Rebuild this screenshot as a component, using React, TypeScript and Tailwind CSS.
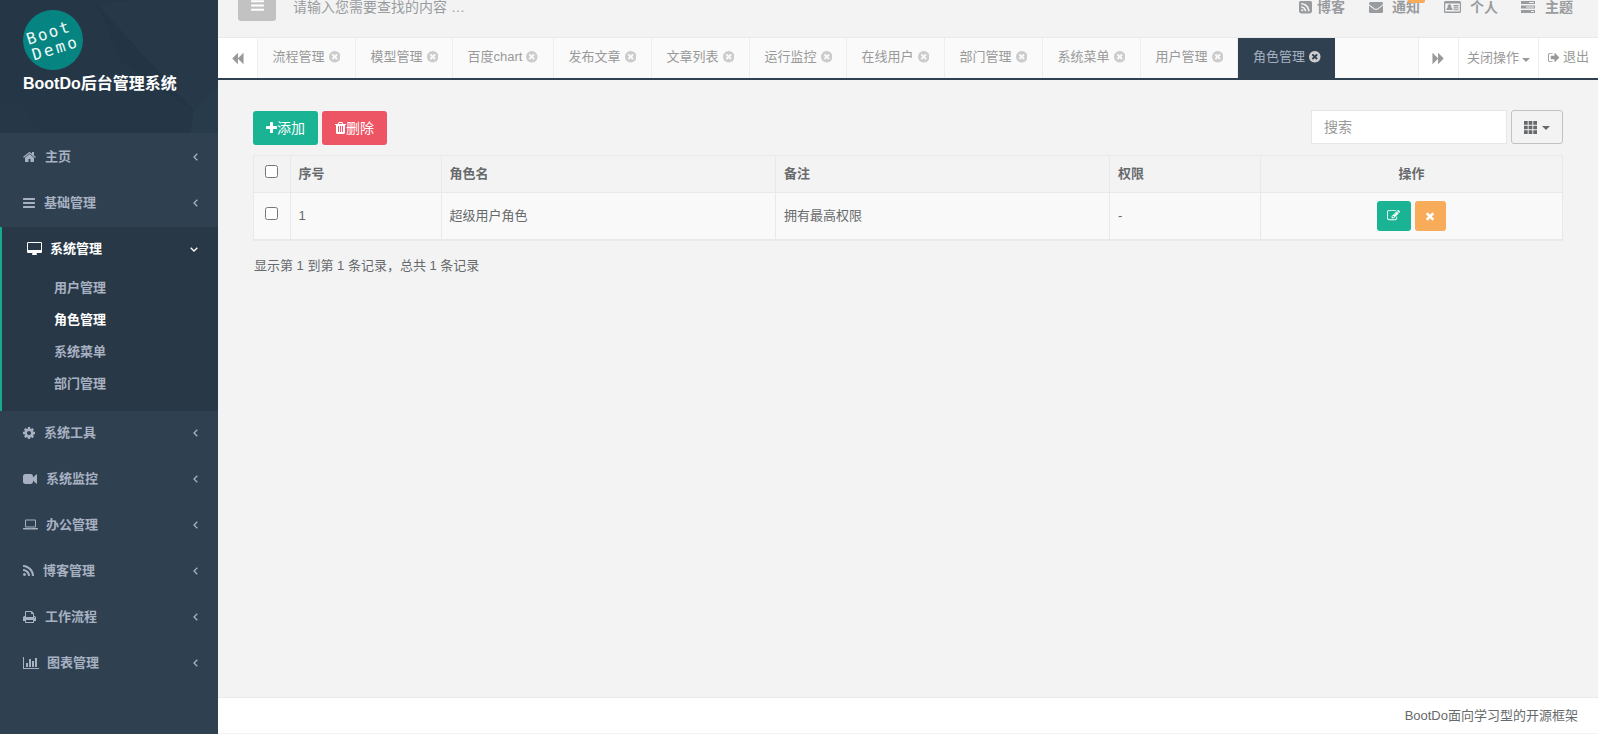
import type { ReactNode } from 'react';

interface IconProps {
  d: string;
  box?: string;
  className?: string;
}

const paths = {
  home: 'M1472 992v480q0 26-19 45t-45 19h-384v-384h-256v384h-384q-26 0-45-19t-19-45v-480q0-1 .5-3t.5-3l575-474 575 474q1 2 1 6zm223-69l-62 74q-8 9-21 11h-3q-13 0-21-7l-692-577-692 577q-12 8-24 7-13-2-21-11l-62-74q-8-10-7-23.5t11-21.5l719-599q32-26 76-26t76 26l244 204v-195q0-14 9-23t23-9h192q14 0 23 9t9 23v408l219 182q10 8 11 21.5t-7 23.5z',
  bars: 'M1664 1344v128q0 26-19 45t-45 19h-1408q-26 0-45-19t-19-45v-128q0-26 19-45t45-19h1408q26 0 45 19t19 45zm0-512v128q0 26-19 45t-45 19h-1408q-26 0-45-19t-19-45v-128q0-26 19-45t45-19h1408q26 0 45 19t19 45zm0-512v128q0 26-19 45t-45 19h-1408q-26 0-45-19t-19-45v-128q0-26 19-45t45-19h1408q26 0 45 19t19 45z',
  backward: 'M1683 141q19-19 32-13t13 32v1472q0 26-13 32t-32-13l-710-710q-9-9-13-19v710q0 26-13 32t-32-13l-710-710q-19-19-19-45t19-45l710-710q19-19 32-13t13 32v710q4-10 13-19z',
  edit: 'M888 1184l116-116-152-152-116 116v56h96v96h56zm440-720q-16-16-33 1l-350 350q-17 17-1 33t33-1l350-350q17-17 1-33zm80 594v190q0 119-84.5 203.5t-203.5 84.5h-832q-119 0-203.5-84.5t-84.5-203.5v-832q0-119 84.5-203.5t203.5-84.5h832q63 0 117 25 15 7 18 23 3 17-9 29l-49 49q-14 14-32 8-23-6-45-6h-832q-66 0-113 47t-47 113v832q0 66 47 113t113 47h832q66 0 113-47t47-113v-126q0-13 9-22l64-64q15-15 35-7t20 29zm-96-738l288 288-672 672h-288v-288zm444 132l-92 92-288-288 92-92q28-28 68-28t68 28l152 152q28 28 28 68t-28 68z',
  times: 'M1490 1322q0 40-28 68l-136 136q-28 28-68 28t-68-28l-294-294-294 294q-28 28-68 28t-68-28l-136-136q-28-28-28-68t28-68l294-294-294-294q-28-28-28-68t28-68l136-136q28-28 68-28t68 28l294 294 294-294q28-28 68-28t68 28l136 136q28 28 28 68t-28 68l-294 294 294 294q28 28 28 68z',
  timesCircle: 'M1277 1122q0-26-19-45l-181-181 181-181q19-19 19-45 0-27-19-46l-90-90q-19-19-46-19-26 0-45 19l-181 181-181-181q-19-19-45-19-27 0-46 19l-90 90q-19 19-19 46 0 26 19 45l181 181-181 181q-19 19-19 45 0 27 19 46l90 90q19 19 46 19 26 0 45-19l181-181 181 181q19 19 45 19 27 0 46-19l90-90q19-19 19-46zm387-226q0 209-103 385.5t-279.5 279.5-385.5 103-385.5-103-279.5-279.5-103-385.5 103-385.5 279.5-279.5 385.5-103 385.5 103 279.5 279.5 103 385.5z',
  plus: 'M1600 736v192q0 40-28 68t-68 28h-416v416q0 40-28 68t-68 28h-192q-40 0-68-28t-28-68v-416h-416q-40 0-68-28t-28-68v-192q0-40 28-68t68-28h416v-416q0-40 28-68t68-28h192q40 0 68 28t28 68v416h416q40 0 68 28t28 68z',
  trash: 'M704 1376v-704q0-14-9-23t-23-9h-64q-14 0-23 9t-9 23v704q0 14 9 23t23 9h64q14 0 23-9t9-23zm256 0v-704q0-14-9-23t-23-9h-64q-14 0-23 9t-9 23v704q0 14 9 23t23 9h64q14 0 23-9t9-23zm256 0v-704q0-14-9-23t-23-9h-64q-14 0-23 9t-9 23v704q0 14 9 23t23 9h64q14 0 23-9t9-23zm-544-992h448l-48-117q-7-9-17-11h-317q-10 2-17 11zm928 32v64q0 14-9 23t-23 9h-96v948q0 83-47 143.5t-113 60.5h-832q-66 0-113-58.5t-47-141.5v-952h-96q-14 0-23-9t-9-23v-64q0-14 9-23t23-9h309l70-167q15-37 54-63t79-26h320q40 0 79 26t54 63l70 167h309q14 0 23 9t9 23z',
  desktop: 'M1728 992v-832q0-13-9.5-22.5t-22.5-9.5h-1600q-13 0-22.5 9.5t-9.5 22.5v832q0 13 9.5 22.5t22.5 9.5h1600q13 0 22.5-9.5t9.5-22.5zm128-832v1088q0 66-47 113t-113 47h-544q0 37 16 77.5t32 71 16 43.5q0 26-19 45t-45 19h-512q-26 0-45-19t-19-45q0-14 16-44t32-70 16-78h-544q-66 0-113-47t-47-113v-1088q0-66 47-113t113-47h1600q66 0 113 47t47 113z',
  cog: 'M1152 896q0-106-75-181t-181-75-181 75-75 181 75 181 181 75 181-75 75-181zm512-109v222q0 12-8 23t-20 13l-185 28q-19 54-39 91 35 50 107 138 10 12 10 25t-9 23q-27 37-99 108t-94 71q-12 0-26-9l-138-108q-44 23-91 38-16 136-29 186-7 28-36 28h-222q-14 0-24.5-8.5t-11.5-21.5l-28-184q-49-16-90-37l-141 107q-10 9-25 9-14 0-25-11-126-114-165-168-7-10-7-23 0-12 8-23 15-21 51-66.5t54-70.5q-27-50-41-99l-183-27q-13-2-21-12.5t-8-23.5v-222q0-12 8-23t19-13l186-28q14-46 39-92-40-57-107-138-10-12-10-24 0-10 9-23 26-36 98.5-107.5t94.5-71.5q13 0 26 10l138 107q44-23 91-38 16-136 29-186 7-28 36-28h222q14 0 24.5 8.5t11.5 21.5l28 184q49 16 90 37l142-107q9-9 24-9 13 0 25 10 129 119 165 170 7 8 7 22 0 12-8 23-15 21-51 66.5t-54 70.5q26 50 41 98l183 28q13 2 21 12.5t8 23.5z',
  video: 'M1792 352v1088q0 42-39 59-13 5-25 5-27 0-45-19l-403-403v166q0 119-84.5 203.5t-203.5 84.5h-704q-119 0-203.5-84.5t-84.5-203.5v-704q0-119 84.5-203.5t203.5-84.5h704q119 0 203.5 84.5t84.5 203.5v165l403-402q18-19 45-19 12 0 25 5 39 17 39 59z',
  laptop: 'M352 1216q-66 0-113-47t-47-113v-704q0-66 47-113t113-47h1088q66 0 113 47t47 113v704q0 66-47 113t-113 47h-1088zm-32-864v704q0 13 9.5 22.5t22.5 9.5h1088q13 0 22.5-9.5t9.5-22.5v-704q0-13-9.5-22.5t-22.5-9.5h-1088q-13 0-22.5 9.5t-9.5 22.5zm1376 928h160v96q0 40-47 68t-113 28h-1600q-66 0-113-28t-47-68v-96h1760zm-720 96q16 0 16-16t-16-16h-160q-16 0-16 16t16 16h160z',
  rss: 'M576 1344q0 80-56 136t-136 56-136-56-56-136 56-136 136-56 136 56 56 136zm512 123q2 28-17 48-18 21-47 21h-135q-25 0-43-16.5t-20-41.5q-22-229-184.5-391.5t-391.5-184.5q-25-2-41.5-20t-16.5-43v-135q0-29 21-47 17-17 43-17h5q160 13 306 80.5t259 181.5q114 113 181.5 259t80.5 306zm512 2q2 27-18 47-18 20-46 20h-143q-26 0-44.5-17.5t-19.5-42.5q-12-215-101-408.5t-231.5-336-336-231.5-408.5-102q-25-1-42.5-19.5t-17.5-43.5v-143q0-28 20-46 18-18 44-18h3q262 13 501.5 120t425.5 294q187 186 294 425.5t120 501.5z',
  print: 'M448 1536h896v-256h-896v256zm0-640h896v-384h-160q-40 0-68-28t-28-68v-160h-640v640zm1152 64q0-26-19-45t-45-19-45 19-19 45 19 45 45 19 45-19 19-45zm128 0v416q0 13-9.5 22.5t-22.5 9.5h-224v160q0 40-28 68t-68 28h-960q-40 0-68-28t-28-68v-160h-224q-13 0-22.5-9.5t-9.5-22.5v-416q0-79 56.5-135.5t135.5-56.5h64v-544q0-40 28-68t68-28h672q40 0 88 20t76 48l152 152q28 28 48 76t20 88v256h64q79 0 135.5 56.5t56.5 135.5z',
  chart: 'M640 896v512h-256v-512h256zm384-512v1024h-256v-1024h256zm1024 1152v128h-2048v-1536h128v1408h1920zm-640-896v768h-256v-768h256zm384-384v1152h-256v-1152h256z',
  rssSquare: 'M640 1216q0-53-37.5-90.5t-90.5-37.5-90.5 37.5-37.5 90.5 37.5 90.5 90.5 37.5 90.5-37.5 37.5-90.5zm351 94q-13-232-177-396t-396-177q-14-1-24 9t-10 23v128q0 13 8.5 22t21.5 10q154 11 264 121t121 264q1 13 10 21.5t22 8.5h128q13 0 23-10t9-24zm384 1q-5-154-56-297.5t-139.5-260-205-205-260-139.5-297.5-56q-14-1-23 9-10 10-10 23v128q0 13 9 22t22 10q204 7 378 111.5t278.5 278.5 111.5 378q1 13 10 22t22 9h128q13 0 23-10 11-9 9-23zm289-959v960q0 119-84.5 203.5t-203.5 84.5h-960q-119 0-203.5-84.5t-84.5-203.5v-960q0-119 84.5-203.5t203.5-84.5h960q119 0 203.5 84.5t84.5 203.5z',
  envelope: 'M1792 710v794q0 66-47 113t-113 47h-1472q-66 0-113-47t-47-113v-794q44 49 101 87 362 246 497 345 57 42 92.5 65.5t94.5 48 110 24.5h2q51 0 110-24.5t94.5-48 92.5-65.5q170-123 498-345 57-39 100-87zm0-294q0 79-49 151t-122 123q-376 261-468 325-10 7-42.5 31t-54 38.5-52 32.5-57.5 27-50 9h-2q-23 0-50-9t-57.5-27-52-32.5-54-38.5-42.5-31q-91-64-262-182.5t-205-142.5q-62-42-117-115.5t-55-136.5q0-78 41.5-130t118.5-52h1472q65 0 112.5 47t47.5 113z',
  signOut: 'M704 1440q0 4 1 20t.5 26.5-3 23.5-10 19.5-20.5 6.5h-320q-119 0-203.5-84.5t-84.5-203.5v-704q0-119 84.5-203.5t203.5-84.5h320q13 0 22.5 9.5t9.5 22.5q0 4 1 20t.5 26.5-3 23.5-10 19.5-20.5 6.5h-320q-66 0-113 47t-47 113v704q0 66 47 113t113 47h312l11.5 1 11.5 3 8 5.5 7 9 2 13.5zm928-544q0 26-19 45l-544 544q-19 19-45 19t-45-19-19-45v-288h-448q-26 0-45-19t-19-45v-384q0-26 19-45t45-19h448v-288q0-26 19-45t45-19 45 19l544 544q19 19 19 45z',
};

const Icon = ({ d, box = '0 0 1792 1792', className = '' }: IconProps) => (
  <svg viewBox={box} fill="currentColor" className={`shrink-0 ${className}`}>
    <path d={d} />
  </svg>
);

const Caret = ({ className = '' }: { className?: string }) => (
  <span className={`border-x-4 border-t-4 border-x-transparent border-t-current ${className}`} />
);

const Logo = () => (
  <svg viewBox="0 0 60 60" className="size-[60px] block font-['DejaVu_Sans_Mono',monospace] font-normal text-[16px]">
    <circle cx="30" cy="30" r="30" fill="#058481" />
    <g fill="#eef8f5">
      <text transform="translate(5.5 35) rotate(-18)" textLength="44">Boot</text>
      <text transform="translate(11 50.500) rotate(-17)" textLength="46">Demo</text>
    </g>
  </svg>
);

const mainMenu = [
  { label: '系统工具', d: paths.cog, box: '128 0 1536 1792', icon: 'w-3 mr-[9px]' },
  { label: '系统监控', d: paths.video, box: '0 0 1792 1792', icon: 'w-3.5 mr-[9px]' },
  { label: '办公管理', d: paths.laptop, box: '-64 0 1920 1792', icon: 'w-[15px] mr-2' },
  { label: '博客管理', d: paths.rss, box: '192 0 1408 1792', icon: 'w-[11px] mr-[9px]' },
  { label: '工作流程', d: paths.print, box: '64 0 1664 1792', icon: 'w-[13px] mr-[9px]' },
  { label: '图表管理', d: paths.chart, box: '0 0 2048 1792', icon: 'w-4 mr-2' },
];

const subMenu = ['用户管理', '角色管理', '系统菜单', '部门管理'];

const tabs = [
  { label: '流程管理', width: 'w-[98px]' },
  { label: '模型管理', width: 'w-[97px]' },
  { label: '百度chart', width: 'w-[101px]' },
  { label: '发布文章', width: 'w-[98px]' },
  { label: '文章列表', width: 'w-[98px]' },
  { label: '运行监控', width: 'w-[97px]' },
  { label: '在线用户', width: 'w-[98px]' },
  { label: '部门管理', width: 'w-[98px]' },
  { label: '系统菜单', width: 'w-[98px]' },
  { label: '用户管理', width: 'w-[97px]' },
];

interface MenuItemProps {
  label: string;
  d: string;
  box: string;
  icon: string;
}

const MenuItem = ({ label, d, box, icon }: MenuItemProps) => (
  <a className="flex items-center h-[46px] pl-[23px] pr-5 text-[#a7b1c2]">
    <Icon d={d} box={box} className={`h-3.5 ${icon}`} />
    <span className="flex-1">{label}</span>
    <svg viewBox="0 0 5 8" className="w-[5px] h-2" fill="none" stroke="currentColor" strokeWidth="1.3">
      <path d="M4.300 .7L1 4l3.300 3.300" />
    </svg>
  </a>
);

const Sidebar = () => (
  <nav className="w-[218px] shrink-0 bg-[#2f4050] text-[13px] font-semibold">
    <div className="relative h-[133px] pt-2.5 pl-[23px] bg-[#253746]">
      <svg viewBox="0 0 218 133" className="absolute inset-0 w-full h-full">
        <path d="M98 5l96 106-74-50z" fill="#233544" />
        <path d="M98 5L130 0h88v85l-24 26z" fill="#273949" />
        <path d="M0 104l24-1 14 30H0z" fill="#263847" />
        <path d="M194 111l24-26v48h-28z" fill="#283b4a" />
      </svg>
      <div className="relative">
        <Logo />
        <strong className="block pt-px text-base leading-[26px] font-bold text-white whitespace-nowrap">BootDo后台管理系统</strong>
      </div>
    </div>
    <div className="h-[94px] pt-px">
      <MenuItem label="主页" d={paths.home} box="64 0 1664 1792" icon="w-[13px] mr-[9px]" />
      <MenuItem label="基础管理" d={paths.bars} box="128 0 1536 1792" icon="w-3 mr-[9px]" />
    </div>
    {/* Expanded group */}
    <div className="h-[184px] bg-[#293846] border-l-2 border-[#19aa8d]">
      <a className="flex items-center h-[45px] pb-px pl-[25px] pr-5 text-white">
        <Icon d={paths.desktop} box="-64 0 1920 1792" className="w-[15px] h-3.5 mr-2" />
        <span className="flex-1">系统管理</span>
        <svg viewBox="0 0 8 5" className="w-2 h-[5px]" fill="none" stroke="currentColor" strokeWidth="1.3">
          <path d="M.7 .7L4 4 7.300 .7" />
        </svg>
      </a>
      {subMenu.map((item) => (
        <a
          key={item}
          className={`flex items-center h-8 pl-[52px] ${item === '角色管理' ? 'text-white' : 'text-[#a7b1c2]'}`}
        >
          {item}
        </a>
      ))}
    </div>
    <div className="-mt-px">
      {mainMenu.map((item) => (
        <MenuItem key={item.label} {...item} />
      ))}
    </div>
  </nav>
);

const TopLink = ({ children, className = '' }: { children: ReactNode; className?: string }) => (
  <a className={`relative flex items-center ${className}`}>{children}</a>
);

const Header = () => (
  <div className="flex h-[37px] pl-5 pr-[25px] text-sm text-[#999c9e]">
    <button className="flex justify-center w-[38px] h-[21px] bg-[#c2c2c2] rounded-b-[3px] text-white">
      <Icon d={paths.bars} className="size-[15px] -mt-[2px]" />
    </button>
    <span className="ml-[17px] h-3.5 leading-3.5">请输入您需要查找的内容 …</span>
    <div className="flex ml-auto h-3.5 leading-3.5 font-semibold">
      <TopLink>
        <Icon d={paths.rssSquare} box="128 128 1536 1536" className="w-[13px] h-[13px] mr-[5px]" />
        博客
      </TopLink>
      <TopLink className="ml-6">
        <Icon d={paths.envelope} className="size-3.5 mr-[9px]" />
        通知
        <span className="absolute left-[39px] -top-[13px] w-[17px] h-4 rounded-[2px] bg-[#f8ac59]" />
      </TopLink>
      <TopLink className="ml-6">
        <svg viewBox="0 0 17 14" fill="currentColor" className="w-[17px] h-3.5 mr-[9px]">
          <path fillRule="evenodd" d="M1.500 1h14a1.500 1.500 0 011.500 1.500v9a1.500 1.500 0 01-1.500 1.500h-14a1.500 1.500 0 01-1.500-1.500v-9a1.500 1.500 0 011.500-1.500zM1.200 3.500v8h14.600v-8zM2.500 10q0-2.500 1.500-2.700a1.900 1.900 0 113 0q1.500.2 1.500 2.700zM9.500 5h5v1.400h-5zM9.500 7.200h5v1.200h-5zM9.500 9.200h5v1h-5z" />
        </svg>
        个人
      </TopLink>
      <TopLink className="ml-[23px]">
        <svg viewBox="0 0 14 14" fill="currentColor" className="size-3.5 mr-[10px]">
          <path fillRule="evenodd" d="M0 1h14v3H0zM8 2v1h5V2zM0 5.500h14v3H0zM5 6.500v1h8v-1zM0 10h14v3H0zM10 11v1h3v-1z" />
        </svg>
        主题
      </TopLink>
    </div>
  </div>
);

const TabBar = () => (
  <div className="flex h-[43px] border-t border-[#e7eaec] border-b-2 border-b-[#2f4050] bg-[#fafafa] text-[13px] text-[#999]">
    <button className="flex items-center justify-center w-10 bg-white border-r border-[#eee]">
      <Icon d={paths.backward} className="w-[13px] h-[13px]" />
    </button>
    {tabs.map((tab) => (
      <a key={tab.label} className={`flex items-center shrink-0 pl-[14.5px] pb-0.5 border-r border-[#eee] ${tab.width}`}>
        {tab.label}
        <Icon d={paths.timesCircle} box="128 128 1536 1536" className="size-[11.5px] ml-1 text-[#ccc]" />
      </a>
    ))}
    <a className="flex items-center w-[97px] shrink-0 pl-[15px] pb-0.5 bg-[#2f4050] text-[#a7b1c2]">
      角色管理
      <Icon d={paths.timesCircle} box="128 128 1536 1536" className="size-[11.5px] ml-1 text-[#ccc]" />
    </a>
    <button className="flex items-center justify-center ml-auto w-10 bg-white border-l border-[#eee]">
      <Icon d={paths.backward} className="w-[13px] h-[13px] rotate-180" />
    </button>
    <button className="flex items-center w-20 pl-2 bg-white border-l border-[#eee]">
      关闭操作
      <Caret className="ml-[3px] mt-1" />
    </button>
    <a className="flex items-center w-[60px] pl-[9px] pb-0.5 bg-white border-l border-[#eee]">
      <Icon d={paths.signOut} box="64 0 1664 1792" className="w-3 h-[13px] mr-[3px]" />
      退出
    </a>
  </div>
);

const RoleTable = () => (
  <table className="w-[1310px] table-fixed border-collapse border border-[#e7eaec] border-b-2 text-left [&_td]:border [&_td]:border-[#e7eaec] [&_th]:border [&_th]:border-[#e7eaec]">
    <colgroup>
      <col className="w-[37px]" />
      <col className="w-[151px]" />
      <col className="w-[334px]" />
      <col className="w-[334px]" />
      <col className="w-[151px]" />
      <col />
    </colgroup>
    <thead>
      <tr className="h-[37px]">
        <th className="pl-[11px] pt-[9px] align-top">
          <input type="checkbox" className="block size-[13px]" />
        </th>
        <th className="px-[7.5px] pb-px">序号</th>
        <th className="px-[7.5px] pb-px">角色名</th>
        <th className="px-2 pb-px">备注</th>
        <th className="px-2 pb-px">权限</th>
        <th className="px-2 pb-px text-center">操作</th>
      </tr>
    </thead>
    <tbody>
      <tr className="h-[47px] bg-[#f9f9f9]">
        <td className="pl-[11px] pt-3.5 align-top">
          <input type="checkbox" className="block size-[13px]" />
        </td>
        <td className="px-[7.5px] pb-px">1</td>
        <td className="px-[7.5px] pb-px">超级用户角色</td>
        <td className="px-2 pb-px">拥有最高权限</td>
        <td className="px-2">-</td>
        <td>
          <div className="flex justify-center gap-1 pr-px">
            <button className="flex items-center justify-center w-[34px] h-[30px] rounded-[3px] bg-[#1ab394] text-white">
              <Icon d={paths.edit} className="size-[13px]" />
            </button>
            <button className="flex items-center justify-center w-[31px] h-[30px] rounded-[3px] bg-[#f8ac59] text-white">
              <Icon d={paths.times} className="size-[12px]" />
            </button>
          </div>
        </td>
      </tr>
    </tbody>
  </table>
);

const Content = () => (
  <main className="flex-1 pt-[30px] pl-[35px] pr-[35px] text-[13px]">
    <div className="flex h-[45px]">
      <button className="flex items-center justify-center mt-[1px] w-[65px] h-[34px] rounded-[3px] bg-[#1ab394] text-sm text-white">
        <Icon d={paths.plus} box="192 0 1408 1792" className="w-[11px] h-3.5" />
        添加
      </button>
      <button className="flex items-center justify-center mt-[1px] ml-1 w-[65px] h-[34px] rounded-[3px] bg-[#ed5565] text-sm text-white">
        <Icon d={paths.trash} box="192 0 1408 1792" className="w-[11px] h-3.5" />
        删除
      </button>
      <input
        placeholder="搜索"
        className="ml-auto w-[196px] h-[34px] px-3 bg-white border border-[#e5e6e7] text-sm placeholder:text-[#999]"
      />
      <button className="flex items-center justify-center ml-1 w-[52px] h-[34px] rounded-[3px] border border-[#c2c2c2]">
        <svg viewBox="0 0 14 14" fill="currentColor" className="size-[13px] mr-[5px]">
          <path d="M0 0h4v4H0zM5 0h4v4H5zM10 0h4v4h-4zM0 5h4v4H0zM5 5h4v4H5zM10 5h4v4h-4zM0 10h4v4H0zM5 10h4v4H5zM10 10h4v4h-4z" />
        </svg>
        <Caret className="mt-0.5" />
      </button>
    </div>
    <RoleTable />
    <p className="mt-[15px] ml-px leading-5">显示第 1 到第 1 条记录，总共 1 条记录</p>
  </main>
);

export default function App() {
  return (
    <div className="flex h-[734px] w-[1598px] overflow-hidden bg-[#f3f3f4] text-[#676a6c] font-['Liberation_Sans','Noto_Sans_CJK_SC',sans-serif]">
      <Sidebar />
      <div className="flex flex-1 min-w-0 flex-col">
        <Header />
        <TabBar />
        <Content />
        <footer className="flex items-center justify-end h-9 mb-px pr-5 border-t border-[#e7eaec] bg-white text-[13px]">
          BootDo面向学习型的开源框架
        </footer>
      </div>
    </div>
  );
}
